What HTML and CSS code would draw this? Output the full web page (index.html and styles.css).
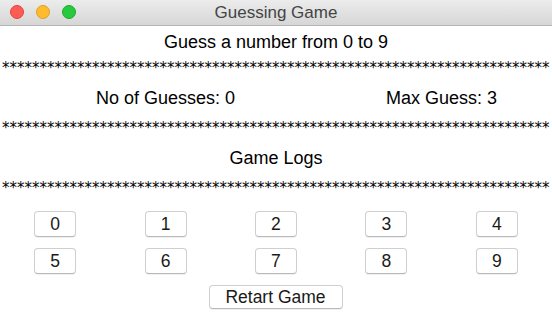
FILE: index.html
```html
<!DOCTYPE html>
<html lang="en">

<head>
    <meta charset="UTF-8">
    <meta name="viewport" content="width=device-width, initial-scale=1.0">
    <title>Guessing Game</title>
    <link rel="stylesheet" href="styles.css">
</head>

<body>
    <div class="window">
        <div class="titlebar">
            <div class="lights">
                <span class="light red"></span>
                <span class="light yellow"></span>
                <span class="light green"></span>
            </div>
            <div class="title">Guessing Game</div>
        </div>

        <div class="content">
            <div class="heading">Guess a number from 0 to 9</div>
            <div class="stars">*************************************************************************</div>
            <div class="stats">
                <span class="guesses">No of Guesses: 0</span>
                <span class="max">Max Guess: 3</span>
            </div>
            <div class="stars">*************************************************************************</div>
            <div class="logs">Game Logs</div>
            <div class="stars">*************************************************************************</div>

            <div class="numbers">
                <button class="num">0</button>
                <button class="num">1</button>
                <button class="num">2</button>
                <button class="num">3</button>
                <button class="num">4</button>
                <button class="num">5</button>
                <button class="num">6</button>
                <button class="num">7</button>
                <button class="num">8</button>
                <button class="num">9</button>
            </div>

            <div class="restart_row">
                <button class="restart">Retart Game</button>
            </div>
        </div>
    </div>
</body>

</html>
```

FILE: styles.css
```css
* {
    margin: 0;
    padding: 0;
    box-sizing: border-box;
}

body {
    width: 552px;
    height: 315px;
    overflow: hidden;
    background: #ffffff;
    font-family: "Liberation Sans", Arial, sans-serif;
    color: #000000;
}

.window {
    width: 552px;
    height: 315px;
    background: #ffffff;
}

.titlebar {
    height: 26px;
    background: linear-gradient(#ececec, #d6d6d6);
    border-bottom: 1px solid #b4b4b4;
    position: relative;
}

.lights {
    display: flex;
    gap: 12px;
    padding: 5px 0 0 10px;
}

.light {
    width: 14px;
    height: 14px;
    border-radius: 50%;
}

.light.red {
    background: #fd5c56;
    border: 1px solid #e0443e;
}

.light.yellow {
    background: #fdbb2d;
    border: 1px solid #dea123;
}

.light.green {
    background: #27c93f;
    border: 1px solid #1aab29;
}

.title {
    position: absolute;
    left: 0;
    right: 0;
    top: 0;
    line-height: 25px;
    text-align: center;
    font-size: 17px;
    color: #444444;
}

.content {
    display: flex;
    flex-direction: column;
}

.heading {
    margin-top: 4px;
    height: 24px;
    line-height: 24px;
    text-align: center;
    font-size: 18px;
}

.stars {
    height: 28px;
    line-height: 28px;
    padding-left: 2px;
    font-family: "DejaVu Sans", sans-serif;
    font-size: 15px;
    white-space: nowrap;
    overflow: hidden;
}

.stats {
    display: grid;
    grid-template-columns: repeat(5, 1fr);
    height: 32px;
    line-height: 32px;
    font-size: 18px;
}

.stats .guesses {
    grid-column: span 3;
    text-align: center;
}

.stats .max {
    grid-column: span 2;
    text-align: center;
}

.logs {
    height: 32px;
    line-height: 32px;
    text-align: center;
    font-size: 18px;
}

.numbers {
    display: grid;
    grid-template-columns: repeat(5, 1fr);
    justify-items: center;
    row-gap: 11px;
    padding-top: 9px;
}

button {
    font-family: "Liberation Sans", Arial, sans-serif;
    font-size: 17.5px;
    color: #1a1a1a;
    background: #ffffff;
    border: 1px solid #cfcfcf;
    border-bottom-color: #b9b9b9;
    border-radius: 4px;
    box-shadow: 0 1px 0 rgba(0, 0, 0, 0.06);
}

.num {
    width: 42px;
    height: 26px;
    line-height: 24px;
}

.restart_row {
    display: flex;
    justify-content: center;
    padding-top: 11px;
    padding-right: 1px;
}

.restart {
    width: 134px;
    height: 24px;
    line-height: 22px;
}
```
